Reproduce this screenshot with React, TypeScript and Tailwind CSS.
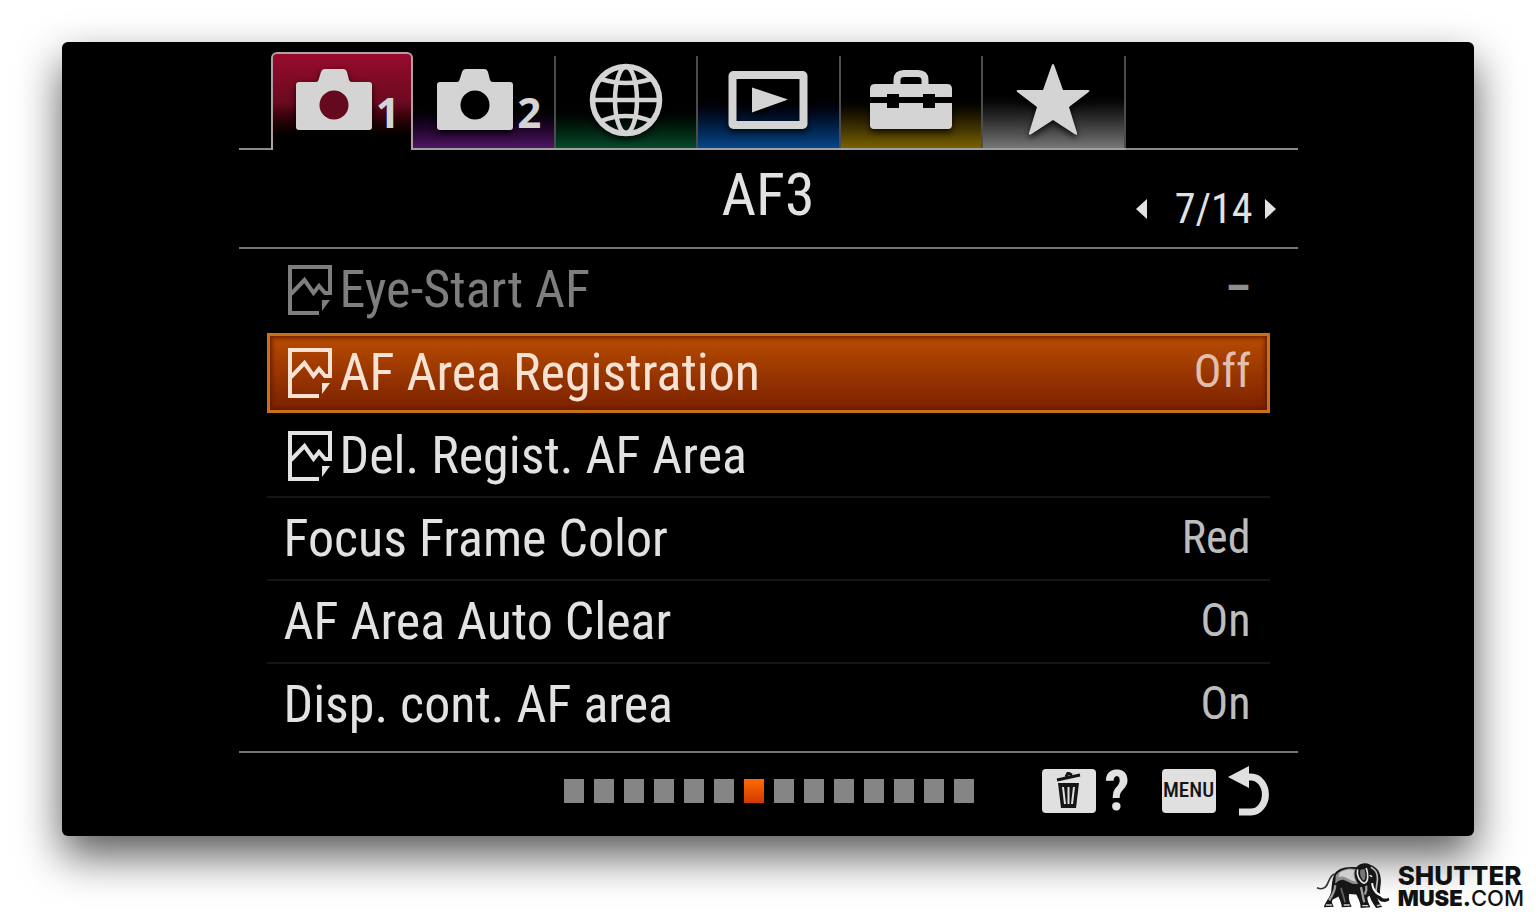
import { useState } from "react";
import type { ReactNode } from "react";
import clsx from "clsx";

const PAGE_COUNT = 14;

const CameraIcon = ({ lens }: { lens: string }) => (
  <svg width="76" height="62" viewBox="0 0 76 62" aria-hidden="true">
    <path
      fill="#d4d4d4"
      d="M3 13H20Q22 13 22.500 11L25 3Q26 0 29 0H47Q50 0 51 3L53 11Q53.500 13 56 13H73Q76 13 76 16V58Q76 61 73 61H3Q0 61 0 58V16Q0 13 3 13Z"
    />
    <circle cx="38" cy="36" r="14.500" fill={lens} />
  </svg>
);

const GlobeIcon = () => (
  <svg width="74" height="74" viewBox="0 0 74 74" fill="none" stroke="#d4d4d4" aria-hidden="true">
    <circle cx="37" cy="37" r="33.500" strokeWidth="5.500" />
    <ellipse cx="37" cy="37" rx="11" ry="33" strokeWidth="4.500" />
    <path d="M3 37H71M12 16Q37 24 62 16M12 58Q37 48 62 58" strokeWidth="4.500" />
  </svg>
);

const PlaybackIcon = () => (
  <svg width="80" height="60" viewBox="0 0 80 60" aria-hidden="true">
    <rect x="4.500" y="5" width="71" height="50" rx="1" fill="none" stroke="#d4d4d4" strokeWidth="8" />
    <path d="M24 17.500L60 29.500L24 42.500Z" fill="#d4d4d4" />
  </svg>
);

const ToolboxIcon = () => (
  <svg width="84" height="62" viewBox="0 0 84 62" aria-hidden="true">
    <path
      d="M28 20V11Q28 4.500 35 4.500H49Q56 4.500 56 11V20"
      fill="none"
      stroke="#d4d4d4"
      strokeWidth="7"
    />
    <path
      fill="#d4d4d4"
      d="M6 15H78Q83 15 83 20V28H66V25H54V28H30V25H18V28H1V20Q1 15 6 15ZM1 34H18V39H30V34H54V39H66V34H83V56Q83 60 79 60H5Q1 60 1 56Z"
    />
  </svg>
);

const StarIcon = () => (
  <svg width="74" height="74" viewBox="0 0 74 74" aria-hidden="true">
    <path
      fill="#d4d4d4"
      d="M37 1Q38 1 38.500 3L47 27H72Q75 27 72 29.500L53 44L61 70Q61.500 73 58.500 71L37 57L15.500 71Q12.500 73 13 70L21 44L2 29.500Q-1 27 2 27H27L35.500 3Q36 1 37 1Z"
    />
  </svg>
);

// Picture frame with a turned corner: marks a stills-only setting.
const StillIcon = () => (
  <svg
    width="44"
    height="52"
    viewBox="0 0 44 52"
    fill="none"
    stroke="currentColor"
    className="shrink-0"
    aria-hidden="true"
  >
    <path d="M31 49H2V3H42V31" strokeWidth="4" />
    <path d="M3 30L16.500 16L25.500 29L31 22L37 29H42" strokeWidth="4" />
    <path d="M34 36H42L34 47Z" fill="currentColor" strokeWidth="0" />
  </svg>
);

const TrashIcon = () => (
  <svg width="26" height="37" viewBox="0 0 26 37" aria-hidden="true">
    <path d="M1 8L24 3M10 5L12 1L16 3" stroke="#151515" strokeWidth="3" fill="none" />
    <path d="M2 11H23L20 36H5Z" fill="#151515" />
    <path d="M7 15L9 32M12.500 15V32M18 15L16 32" stroke="#e0e0e0" strokeWidth="2" />
  </svg>
);

const ReturnIcon = () => (
  <svg width="42" height="52" viewBox="0 0 42 52" aria-hidden="true">
    <path d="M0 12L21 1V23Z" fill="#e0e0e0" />
    <path d="M18 12H23A14 17 0 0 1 23 47H11" fill="none" stroke="#e0e0e0" strokeWidth="7" />
  </svg>
);

const ElephantLogo = () => (
  <svg width="74" height="48" viewBox="50 31 224 145" aria-hidden="true">
    <path
      fill="#161616"
      d="M105 72C112 55 140 45 172 50C182 38 200 34 214 42C235 48 245 65 246 85C248 105 240 120 246 138C252 146 262 146 270 142L272 150C262 157 248 156 240 148L236 142C238 155 246 162 250 170L232 173C222 160 216 148 212 136L206 140C204 152 212 162 214 171L185 173C186 158 178 145 172 132L150 131C148 145 152 158 158 169L128 171C128 158 120 145 118 138L100 148C96 156 100 162 104 169L74 171C76 158 92 142 96 125C98 105 98 90 105 72Z"
    />
    <path d="M106 70C88 76 90 100 78 110C70 117 60 115 53 112" fill="none" stroke="#333" strokeWidth="5" />
    <path fill="#8f8f8f" d="M110 74C122 56 150 50 170 55C164 70 168 86 178 100C160 104 148 92 134 88C122 86 114 94 108 100Z" />
    <path fill="#cfcfcf" d="M122 66C138 56 156 55 166 59C161 70 165 84 172 94C158 92 148 84 138 80C130 76 124 78 118 80Z" />
    <path d="M176 56C172 74 182 94 196 98C210 94 208 68 202 52" fill="none" stroke="#e8e8e8" strokeWidth="5" />
    <path fill="#777" d="M184 58C182 72 186 86 195 90C202 84 200 66 196 54Z" />
    <path d="M216 50C230 56 236 70 236 84C236 100 230 114 232 128" fill="none" stroke="#b8b8b8" strokeWidth="5" />
    <path d="M220 98C222 122 238 138 262 136" fill="none" stroke="#fff" strokeWidth="6" />
    <path d="M212 74L220 78" stroke="#fff" strokeWidth="4" />
    <path
      d="M108 104C109 118 100 134 90 150M186 110C190 126 192 140 196 156M202 106C204 116 202 124 198 132"
      fill="none"
      stroke="#9c9c9c"
      strokeWidth="7"
    />
    <path d="M126 112C128 124 134 138 138 156" fill="none" stroke="#666" strokeWidth="5" />
    <path d="M80 164H98M134 164H152M190 166H208M234 166L246 164" stroke="#d0d0d0" strokeWidth="4" />
  </svg>
);

type TabDef = {
  name: string;
  shade: string;
  icon: ReactNode;
  number?: string;
};

const TABS: TabDef[] = [
  {
    name: "Camera settings 1",
    shade: "bg-linear-to-b from-[#980a2d] via-[#6c0a20] via-50% to-black to-92%",
    icon: <CameraIcon lens="#65091f" />,
    number: "1",
  },
  {
    name: "Camera settings 2",
    shade: "bg-linear-to-b from-black from-50% to-[#4e1664]",
    icon: <CameraIcon lens="#000" />,
    number: "2",
  },
  {
    name: "Network",
    shade: "bg-linear-to-b from-black from-50% to-[#064a2b]",
    icon: <GlobeIcon />,
  },
  {
    name: "Playback",
    shade: "bg-linear-to-b from-black from-40% to-[#06478a]",
    icon: <PlaybackIcon />,
  },
  {
    name: "Setup",
    shade: "bg-linear-to-b from-black from-40% to-[#7a6200]",
    icon: <ToolboxIcon />,
  },
  {
    name: "My menu",
    shade: "bg-linear-to-b from-black from-35% to-[#777]",
    icon: <StarIcon />,
  },
];

type Setting = {
  label: string;
  value?: string;
  still?: boolean;
  disabled?: boolean;
};

const SETTINGS: Setting[] = [
  { label: "Eye-Start AF", value: "–", still: true, disabled: true },
  { label: "AF Area Registration", value: "Off", still: true },
  { label: "Del. Regist. AF Area", still: true },
  { label: "Focus Frame Color", value: "Red" },
  { label: "AF Area Auto Clear", value: "On" },
  { label: "Disp. cont. AF area", value: "On" },
];

const MenuTabs = () => (
  <div className="flex h-[98px] items-stretch">
    <div className="w-8 border-b-2 border-[#8a8a8a]" />
    <div role="tablist" className="grid flex-1 grid-cols-6">
      {TABS.map((tab, i) => (
        <div
          key={tab.name}
          className={clsx("flex", i > 0 && "border-b-2 border-[#a0a0a0] pt-1")}
        >
          <button
            type="button"
            role="tab"
            aria-label={tab.name}
            aria-selected={i === 0}
            className={clsx(
              "flex flex-1 items-center justify-center pb-1",
              tab.shade,
              tab.number && "pl-3",
              i === 0
                ? "rounded-t-md border-2 border-b-0 border-[#b0a0a4]"
                : "border-r-2 border-[#4c4c4c]",
            )}
          >
            <span className="drop-shadow-[0_3px_3px_rgba(0,0,0,0.8)]">{tab.icon}</span>
            {tab.number && (
              <span className="mt-6 ml-1 font-['Open_Sans',sans-serif] text-[42px] leading-10 font-bold text-[#d4d4d4]">
                {tab.number}
              </span>
            )}
          </button>
        </div>
      ))}
    </div>
    <div className="w-[172px] border-b-2 border-[#8a8a8a]" />
  </div>
);

const SettingRow = ({
  setting,
  selected,
  onSelect,
}: {
  setting: Setting;
  selected: boolean;
  onSelect: () => void;
}) => (
  <button
    type="button"
    disabled={setting.disabled}
    onClick={onSelect}
    className={clsx(
      "flex h-20 w-full items-center justify-between border-3 pr-4 pl-[14px]",
      selected
        ? "border-[#c9701c] bg-linear-to-b from-[#b84c00] to-[#7c2100] text-[#f8e2d4] shadow-[inset_0_0_4px_2px_rgba(100,25,0,0.9)]"
        : "border-transparent",
      !selected && (setting.disabled ? "text-[#7e7e7e]" : "text-[#e2e2e2]"),
    )}
  >
    <span className={clsx("flex items-center gap-2", setting.still && "pl-1")}>
      {setting.still && <StillIcon />}
      <span className="text-[52px] leading-16">{setting.label}</span>
    </span>
    <span
      className={clsx(
        "pb-1 text-[46px] leading-14",
        selected ? "text-[#e0bfb0]" : setting.disabled ? "font-bold text-[#8e8e8e]" : "text-[#bdbdbd]",
      )}
    >
      {setting.value}
    </span>
  </button>
);

const Footer = () => (
  <footer className="flex h-[85px] items-center justify-end border-t-2 border-[#767676] pr-7 pb-2">
    <div className="mr-[68px] flex gap-[10px]" role="img" aria-label={`Page 7 of ${PAGE_COUNT}`}>
      {Array.from({ length: PAGE_COUNT }, (_, i) => (
        <span
          key={i}
          className={clsx(
            "h-6 w-5",
            i === 6 ? "bg-linear-to-b from-[#ff6a05] to-[#d03800]" : "bg-[#858585]",
          )}
        />
      ))}
    </div>
    <button type="button" aria-label="Help" className="flex items-center gap-2">
      <span className="flex h-11 w-[54px] items-center justify-center rounded-sm bg-[#e0e0e0]">
        <TrashIcon />
      </span>
      <span className="text-[56px] leading-11 font-bold">?</span>
    </button>
    <button type="button" aria-label="Back" className="ml-8 flex items-center gap-3">
      <span className="flex h-11 w-[54px] items-center justify-center rounded-sm bg-[#e0e0e0] text-[21px] font-medium text-[#151515]">
        MENU
      </span>
      <ReturnIcon />
    </button>
  </footer>
);

export default function App() {
  const [selected, setSelected] = useState(1);

  return (
    <div className="min-h-screen bg-white pt-[42px]">
      <main className="mx-[62px] rounded-md bg-black pt-[10px] font-['Roboto_Condensed','Arial_Narrow',sans-serif] text-[#e2e2e2] shadow-[0_20px_44px_rgba(0,0,0,0.65)]">
        <div className="mx-auto w-3/4">
          <MenuTabs />
          <header className="grid h-[99px] grid-cols-3 items-center border-b-2 border-[#767676]">
            <h1 className="col-start-2 pb-2 text-center text-[60px] leading-16">AF3</h1>
            <div className="flex items-center justify-end gap-3 pt-5 pr-[22px]">
              <button type="button" aria-label="Previous page">
                <svg width="11" height="20" viewBox="0 0 11 20" aria-hidden="true">
                  <path d="M11 0V20L0 10Z" fill="#e2e2e2" />
                </svg>
              </button>
              <span className="pl-4 text-[42px] leading-12">7/{PAGE_COUNT}</span>
              <button type="button" aria-label="Next page">
                <svg width="11" height="20" viewBox="0 0 11 20" aria-hidden="true">
                  <path d="M0 0V20L11 10Z" fill="#e2e2e2" />
                </svg>
              </button>
            </div>
          </header>
          <ul className="px-7 pb-1">
            {SETTINGS.map((setting, i) => (
              <li
                key={setting.label}
                className={clsx(
                  "flex h-[83px] items-center border-b-2",
                  i > 1 && i < 5 ? "border-[#161616]" : "border-transparent",
                )}
              >
                <SettingRow
                  setting={setting}
                  selected={i === selected}
                  onSelect={() => setSelected(i)}
                />
              </li>
            ))}
          </ul>
          <Footer />
        </div>
      </main>
      <a
        href="#"
        className="mt-6 mr-3 ml-auto flex w-fit items-center gap-2 font-['Inter',sans-serif] leading-[23px] text-[#111]"
      >
        <ElephantLogo />
        <span className="flex flex-col pt-1">
          <span className="text-[26px] font-extrabold">SHUTTER</span>
          <span className="text-[22px]">
            <span className="font-black">MUSE.</span>
            <span className="font-medium">COM</span>
          </span>
        </span>
      </a>
    </div>
  );
}
